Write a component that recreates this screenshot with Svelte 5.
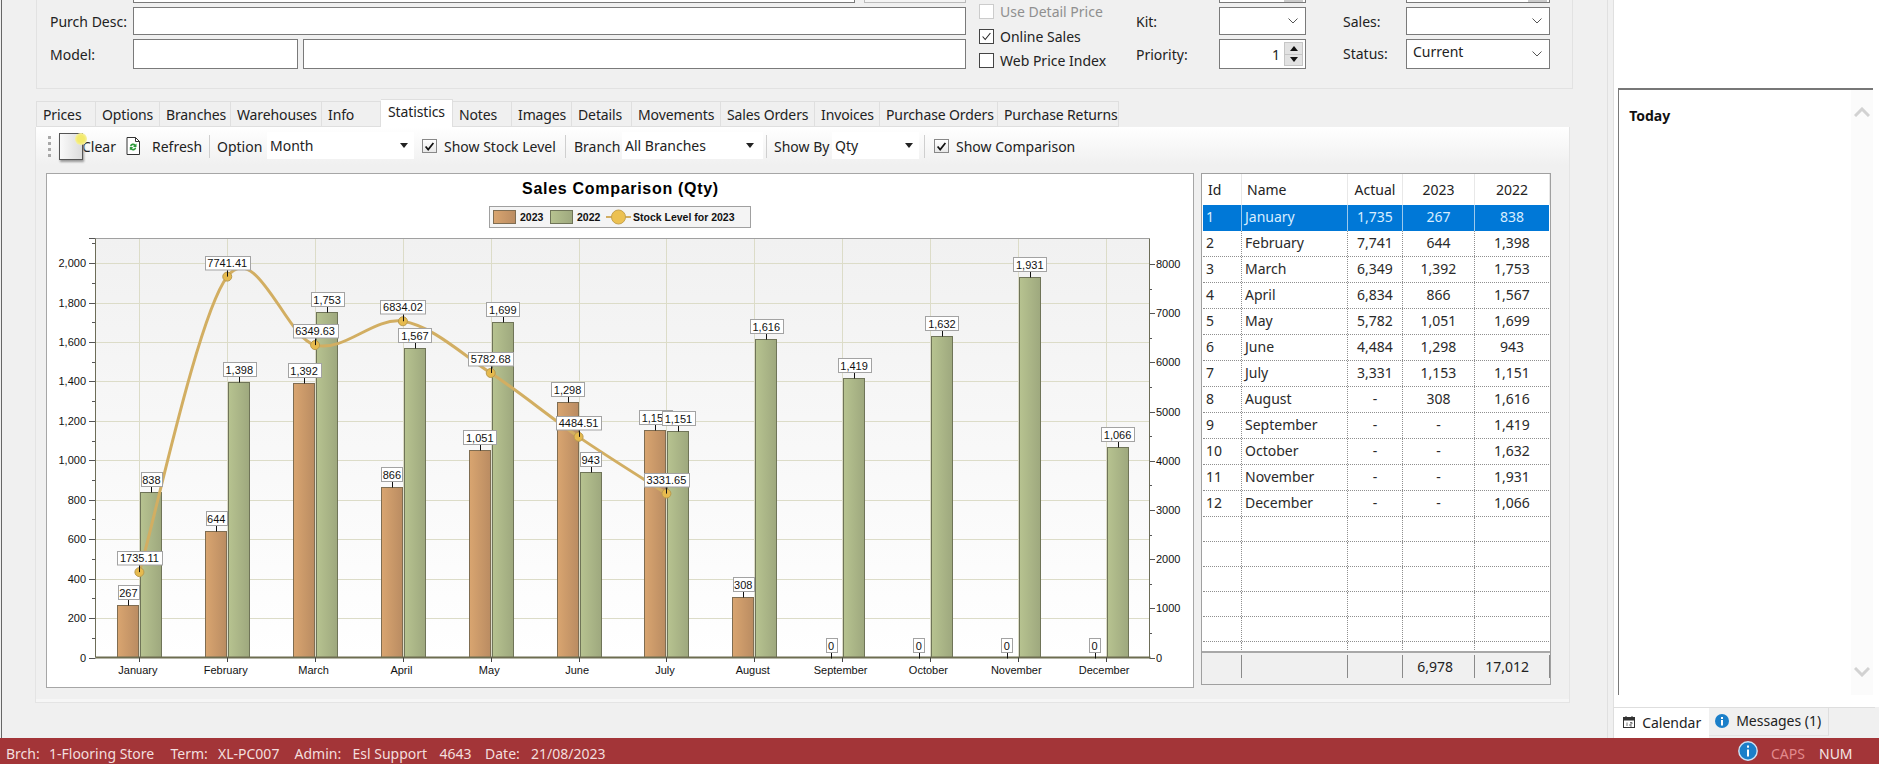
<script>
  const tabs = [['Prices',60],['Options',64],['Branches',71],['Warehouses',91],['Info',59],['Statistics',72],['Notes',59],['Images',60],['Details',60],['Movements',89],['Sales Orders',94],['Invoices',65],['Purchase Orders',118],['Purchase Returns',121]];
  const months = ['January','February','March','April','May','June','July','August','September','October','November','December'];
  const y23 = [267,644,1392,866,1051,1298,1153,308,0,0,0,0];
  const y22 = [838,1398,1753,1567,1699,943,1151,1616,1419,1632,1931,1066];
  const stock = [1735.11,7741.41,6349.63,6834.02,5782.68,4484.51,3331.65];
  const actual = ['1,735','7,741','6,349','6,834','5,782','4,484','3,331','-','-','-','-','-'];
  const fmt = (v) => v.toLocaleString('en-US');
  const t23 = y23.map((v) => (v === 0 ? '-' : fmt(v)));
  const status = [['Brch:',43],['1-Flooring Store',121.5],['Term:',47.5],['XL-PC007',76.5],['Admin:',58],['Esl Support',87],['4643',45.5],['Date:',46],['21/08/2023',90]];

  const L = 95.5, R = 1149.5, T = 238.5, B = 657.5;
  const step = (R - L) / 12;
  const cx = (i) => L + (i + 0.5) * step;
  const yl = (v) => B - v * 0.1972;
  const yr = (v) => B - v * 0.0492;
  const px = (v) => Math.round(v) + 0.5;

  const pts = stock.map((v, i) => [cx(i), yr(v)]);
  let spline = `M${pts[0][0]} ${pts[0][1]}`;
  for (let i = 0; i < pts.length - 1; i++) {
    const p0 = pts[Math.max(i - 1, 0)], p1 = pts[i], p2 = pts[i + 1], p3 = pts[Math.min(i + 2, pts.length - 1)];
    const c1 = [p1[0] + (p2[0] - p0[0]) / 6, p1[1] + (p2[1] - p0[1]) / 6];
    const c2 = [p2[0] - (p3[0] - p1[0]) / 6, p2[1] - (p3[1] - p1[1]) / 6];
    spline += ` C${c1[0]} ${c1[1]} ${c2[0]} ${c2[1]} ${p2[0]} ${p2[1]}`;
  }

  const majorsL = [0,200,400,600,800,1000,1200,1400,1600,1800,2000];
  const minorsL = [100,300,500,700,900,1100,1300,1500,1700,1900,2100];
  const majorsR = [0,1000,2000,3000,4000,5000,6000,7000,8000];
  const minorsR = [500,1500,2500,3500,4500,5500,6500,7500];

  const labelW = (s) => s.length <= 1 ? 11 : s.length === 3 ? 21 : s.length === 5 ? 33 : 45;
  const bar23 = y23.map((v, i) => ({ x: Math.round(cx(i) - 22) + 0.5, w: 21, top: px(yl(v)), v, lx: cx(i) - 11, s: fmt(v) }));
  const bar22 = y22.map((v, i) => ({ x: Math.round(cx(i) + 1) + 0.5, w: 21, top: px(yl(v)), v, lx: cx(i) + 12, s: fmt(v) }));
  const stockLabels = stock.map((v, i) => ({ x: pts[i][0], y: pts[i][1], s: v.toFixed(2) }));
</script>

<div class="page">
  <div class="stage">
    <main class="main">
      <section class="form">
        <div class="form-left">
          <div class="row clip"><span class="lab"></span><div class="input cut w722"></div><div class="input cut gray w102"></div></div>
          <div class="row r28"><span class="lab">Purch Desc:</span><div class="input grow"></div></div>
          <div class="row r30"><span class="lab">Model:</span><div class="input w165"></div><div class="input grow"></div></div>
        </div>
        <div class="checks">
          <label class="chk off"><span class="box"></span>Use Detail Price</label>
          <label class="chk"><span class="box"><svg viewBox="0 0 15 15" width="13" height="13"><path d="M3 7.500 6 11 12 3.500" fill="none" stroke="#222" stroke-width="1.200"/></svg></span>Online Sales</label>
          <label class="chk"><span class="box"></span>Web Price Index</label>
        </div>
        <div class="form-right">
          <span></span><div class="input cut stub"><i></i></div><span></span><span></span><div class="input cut stub"><i></i></div>
          <span class="lab2">Kit:</span>
          <div class="input combo"><svg viewBox="0 0 10 6" width="10" height="6"><path d="M.5.5 5 5 9.500.5" fill="none" stroke="#555"/></svg></div>
          <span></span>
          <span class="lab2">Sales:</span>
          <div class="input combo"><svg viewBox="0 0 10 6" width="10" height="6"><path d="M.5.5 5 5 9.500.5" fill="none" stroke="#555"/></svg></div>
          <span class="lab2 low">Priority:</span>
          <div class="input spin"><span class="num">1</span><div class="spinbtn"><b><svg viewBox="0 0 8 5" width="8" height="5"><path d="M4 0 8 5H0z" fill="#111"/></svg></b><b><svg viewBox="0 0 8 5" width="8" height="5"><path d="M0 0H8L4 5z" fill="#111"/></svg></b></div></div>
          <span></span>
          <span class="lab2">Status:</span>
          <div class="input combo"><span class="val">Current</span><svg viewBox="0 0 10 6" width="10" height="6"><path d="M.5.5 5 5 9.500.5" fill="none" stroke="#555"/></svg></div>
        </div>
      </section>

      <nav class="tabs">
        {#each tabs as t}
          <div class="tab" class:active={t[0] === 'Statistics'} style="width:{t[1]}px">{t[0]}</div>
        {/each}
      </nav>

      <section class="panel">
        <div class="toolbar">
          <span class="grip"><i></i><i></i><i></i><i></i></span>
          <button class="clear" aria-label="Clear"><span class="glow"></span></button>
          <span class="t-clear">Clear</span>
          <svg class="refresh" viewBox="0 0 14 18" width="14" height="18"><path d="M1 .5H9.500L13.500 4.500V17.500H1z" fill="#fff" stroke="#333"/><path d="M9.500.5V4.500H13.500" fill="none" stroke="#333"/><path d="M4 9a3.200 3.200 0 0 1 5.500-1.500L10.500 6.500V10H7L8.300 8.700A1.800 1.800 0 0 0 5.300 9.500zM10.300 11a3.200 3.200 0 0 1-5.500 1.500L3.800 13.500V10H7.300L6 11.300A1.800 1.800 0 0 0 9 10.500z" fill="#2f9a3c"/></svg>
          <span class="t-refresh">Refresh</span>
          <span class="sep s1"></span>
          <span class="t-opt">Option</span>
          <div class="dd d1"><span>Month</span><svg viewBox="0 0 8 5" width="8" height="5"><path d="M0 0H8L4 5z" fill="#222"/></svg></div>
          <span class="tick t1"><svg viewBox="0 0 15 15" width="13" height="13"><path d="M3 7.500 6 11 12 3.500" fill="none" stroke="#111" stroke-width="2"/></svg></span>
          <span class="t-stock">Show Stock Level</span>
          <span class="sep s2"></span>
          <span class="t-branch">Branch</span>
          <div class="dd d2"><span>All Branches</span><svg viewBox="0 0 8 5" width="8" height="5"><path d="M0 0H8L4 5z" fill="#222"/></svg></div>
          <span class="sep s3"></span>
          <span class="t-by">Show By</span>
          <div class="dd d3"><span>Qty</span><svg viewBox="0 0 8 5" width="8" height="5"><path d="M0 0H8L4 5z" fill="#222"/></svg></div>
          <span class="sep s4"></span>
          <span class="tick t2"><svg viewBox="0 0 15 15" width="13" height="13"><path d="M3 7.500 6 11 12 3.500" fill="none" stroke="#111" stroke-width="2"/></svg></span>
          <span class="t-comp">Show Comparison</span>
        </div>

        <div class="content">
          <div class="chart">
            <svg width="1146" height="513" viewBox="47 174 1146 513" font-family="'Liberation Sans',Arial,sans-serif" font-size="11" fill="#111">
              <defs>
                <linearGradient id="gO" x1="0" x2="1" y1="0" y2="0"><stop offset="0" stop-color="#d9a570"/><stop offset="1" stop-color="#ba8c62"/></linearGradient>
                <linearGradient id="gG" x1="0" x2="1" y1="0" y2="0"><stop offset="0" stop-color="#b7c390"/><stop offset="1" stop-color="#9ea87e"/></linearGradient>
                <linearGradient id="gP" x1="0" x2="0" y1="0" y2="1"><stop offset="0" stop-color="#f1f1f1"/><stop offset="1" stop-color="#ffffff"/></linearGradient>
              </defs>

              <text x="620.500" y="194" text-anchor="middle" font-size="16" font-weight="700" letter-spacing=".7" fill="#000">Sales Comparison (Qty)</text>

              <rect x="489.500" y="206.500" width="261" height="21" fill="#f4f4f4" stroke="#a0a0a0"/>
              <rect x="493.500" y="210.500" width="22" height="13" fill="url(#gO)" stroke="#7f6d52"/>
              <text x="520" y="221" font-size="10.500" font-weight="700">2023</text>
              <rect x="550.500" y="210.500" width="22" height="13" fill="url(#gG)" stroke="#6f7458"/>
              <text x="577" y="221" font-size="10.500" font-weight="700">2022</text>
              <line x1="606" x2="631" y1="217" y2="217" stroke="#d2ae62" stroke-width="2"/>
              <circle cx="618.500" cy="217" r="7" fill="#ecc152" stroke="#c5a24e"/>
              <text x="633" y="221" font-size="10.500" font-weight="700">Stock Level for 2023</text>

              <rect x={L} y={T} width={R - L} height={B - T} fill="url(#gP)"/>
              {#each majorsL.slice(1) as v}
                <line x1={L} x2={R} y1={px(yl(v))} y2={px(yl(v))} stroke="#dcdcc8"/>
              {/each}
              {#each months as m, i}
                <line x1={px(cx(i))} x2={px(cx(i))} y1={T} y2={B} stroke="#dcdcc8"/>
              {/each}
              <line x1={L} x2={R} y1={T} y2={T} stroke="#a0a0a0"/>

              {#each majorsL as v}
                <line x1="89" x2={L} y1={px(yl(v))} y2={px(yl(v))} stroke="#555"/>
                <text x="86" y={yl(v) + 4} text-anchor="end">{fmt(v)}</text>
              {/each}
              {#each minorsL as v}
                <line x1="92" x2={L} y1={px(yl(v))} y2={px(yl(v))} stroke="#555"/>
              {/each}
              <line x1="89" x2={L} y1={T} y2={T} stroke="#555"/>
              {#each majorsR as v}
                <line x1={R} x2="1155" y1={px(yr(v))} y2={px(yr(v))} stroke="#555"/>
                <text x="1156" y={yr(v) + 4}>{v}</text>
              {/each}
              {#each minorsR as v}
                <line x1={R} x2="1152" y1={px(yr(v))} y2={px(yr(v))} stroke="#555"/>
              {/each}
              <line x1={L} x2={L} y1={T} y2={B} stroke="#6d6d58"/>
              <line x1={R} x2={R} y1={T} y2={B} stroke="#6d6d58"/>

              {#each bar23 as b}
                {#if b.v > 0}<rect x={b.x} y={b.top} width={b.w} height={B - b.top} fill="url(#gO)" stroke="#7f6d52"/>{/if}
              {/each}
              {#each bar22 as b}
                <rect x={b.x} y={b.top} width={b.w} height={B - b.top} fill="url(#gG)" stroke="#6f7458"/>
              {/each}
              <line x1={L} x2={R + 1} y1={B} y2={B} stroke="#6d6d50" stroke-width="2"/>
              {#each months as m, i}
                <line x1={px(cx(i))} x2={px(cx(i))} y1={B} y2="662" stroke="#444"/>
                <text x={cx(i) - 1.500} y="674" text-anchor="middle">{m}</text>
              {/each}

              <path d={spline} fill="none" stroke="#d2ae62" stroke-width="3"/>
              {#each stockLabels as p}
                <circle cx={p.x} cy={p.y} r="4.500" fill="#e6ba4e" stroke="#b99a4f"/>
              {/each}

              {#each [...bar23, ...bar22] as b}
                <line x1={px(b.lx)} x2={px(b.lx)} y1={b.top - 6} y2={b.top} stroke="#111"/>
                <rect x={Math.round(b.lx - labelW(b.s) / 2) + 0.5} y={b.top - 20} width={labelW(b.s)} height="14" fill="#fff" stroke="#a3a3a3"/>
                <text x={b.lx} y={b.top - 9} text-anchor="middle">{b.s}</text>
              {/each}
              {#each stockLabels as p}
                <line x1={px(p.x)} x2={px(p.x)} y1={p.y - 7} y2={p.y} stroke="#111"/>
                <rect x={Math.round(p.x - 22.500) + 0.5} y={Math.round(p.y - 21) + 0.5} width="45" height="13.500" fill="#fff" stroke="#a3a3a3"/>
                <text x={p.x} y={Math.round(p.y - 10)} text-anchor="middle">{p.s}</text>
              {/each}
            </svg>
          </div>

          <div class="grid">
            <div class="g-head">
              <div class="left">Id</div><div class="left">Name</div><div>Actual</div><div>2023</div><div>2022</div>
            </div>
            <div class="g-body">
              {#each months as m, i}
                <div class="g-row" class:sel={i === 0}>
                  <div class="left">{i + 1}</div><div class="left">{m}</div><div>{actual[i]}</div><div>{t23[i]}</div><div>{fmt(y22[i])}</div>
                </div>
              {/each}
              {#each [0,1,2,3,4,5] as e}
                <div class="g-row empty"><div></div><div></div><div></div><div></div><div></div></div>
              {/each}
            </div>
            <div class="g-foot">
              <div></div><div></div><div></div><div>6,978</div><div>17,012</div>
            </div>
          </div>
        </div>
      </section>
    </main>

    <aside class="side">
      <div class="side-top"></div>
      <div class="cal">
        <div class="cal-body"><strong>Today</strong></div>
        <div class="cal-scroll">
          <svg viewBox="0 0 16 10" width="16" height="10"><path d="M1 9 8 2 15 9" fill="none" stroke="#d2d2d2" stroke-width="3"/></svg>
          <svg viewBox="0 0 16 10" width="16" height="10"><path d="M1 1 8 8 15 1" fill="none" stroke="#d2d2d2" stroke-width="3"/></svg>
        </div>
      </div>
      <div class="side-tabs">
        <div class="s-tab on">
          <svg viewBox="0 0 12 12" width="12" height="12"><rect x=".5" y="1.500" width="11" height="10" fill="#fff" stroke="#333"/><rect x=".5" y="1.500" width="11" height="3" fill="#333"/><path d="M3 0V3M9 0V3" stroke="#333"/><path d="M4 6.500V10M7 6.500H9V8H7V10H9" fill="none" stroke="#555" stroke-width=".8"/></svg>
          Calendar
        </div>
        <div class="s-tab msg">
          <svg viewBox="0 0 14 14" width="14" height="14"><circle cx="7" cy="7" r="7" fill="#1b7fc9"/><rect x="6" y="6" width="2" height="5.500" fill="#fff"/><rect x="6" y="3" width="2" height="2" fill="#fff"/></svg>
          Messages (1)
        </div>
      </div>
    </aside>
  </div>

  <footer class="status">
    {#each status as s}<span class="st" style="width:{s[1]}px">{s[0]}</span>{/each}
    <span class="spacer"></span>
    <svg class="info" viewBox="0 0 20 20" width="20" height="20"><circle cx="10" cy="10" r="9.200" fill="#1b7fc9" stroke="#cfe4f5" stroke-width="1.400"/><rect x="9" y="8.500" width="2" height="7" fill="#fff"/><rect x="9" y="4.500" width="2" height="2.200" fill="#fff"/></svg>
    <span class="st caps">CAPS</span>
    <span class="st num-l">NUM</span>
  </footer>
</div>

<style>
  :global(body) { margin: 0; background: #f0f0f0; }
  .page { width: 1879px; height: 764px; overflow: hidden; font: 14px "Noto Sans", "Open Sans", sans-serif; color: #222; display: flex; flex-direction: column; }
  .stage { display: flex; height: 738px; }
  .main { width: 1607px; box-sizing: border-box; border-left: 1px solid #666; margin-left: 1px; }

  .form { margin-left: 34px; width: 1537px; height: 89px; box-sizing: border-box; border: 1px solid #e2e2e2; border-top: none; display: flex; }
  .form-left { margin-left: 13px; width: 916px; display: flex; flex-direction: column; gap: 4px; }
  .row { display: flex; }
  .clip { height: 3px; gap: 9px; }
  .clip .lab { margin-right: -9px; }
  .r28 { height: 28px; align-items: stretch; }
  .r30 { height: 30px; gap: 5px; }
  .lab { width: 83px; line-height: 30px; flex: none; }
  .r30 .lab { margin-right: -5px; line-height: 32px; }
  .input { background: #fff; border: 1px solid #7a7a7a; box-sizing: border-box; }
  .cut { border-top: none; }
  .gray { border-color: #bbb; background: #f4f4f4; }
  .w722 { width: 722px; }
  .w102 { width: 102px; }
  .w165 { width: 165px; }
  .grow { flex: 1; }

  .checks { margin-left: 13px; width: 157px; flex: none; display: flex; flex-direction: column; padding-top: 1px; }
  .chk { display: flex; align-items: center; gap: 6px; height: 20px; margin-bottom: 4px; white-space: nowrap; }
  .chk:nth-child(2) { margin-top: 1px; }
  .chk:nth-child(3) { margin-bottom: 0; }
  .chk .box { width: 15px; height: 15px; box-sizing: border-box; border: 1px solid #444; background: #fff; display: flex; align-items: center; justify-content: center; flex: none; }
  .chk.off { color: #8f8f8f; }
  .chk.off .box { border-color: #ccc; }

  .form-right { display: grid; grid-template-columns: 83px 87px 37px 63px 144px; grid-template-rows: 3px 28px 30px; row-gap: 4px; align-content: start; }
  .stub { position: relative; }
  .stub i { position: absolute; right: 2px; bottom: 0; width: 19px; height: 2px; background: #ccc; }
  .lab2 { line-height: 30px; }
  .lab2.low { line-height: 32px; }
  .combo { display: flex; align-items: center; justify-content: flex-end; padding-right: 7px; }
  .combo .val { flex: 1; padding-left: 6px; margin-top: -5px; }
  .spin { display: flex; align-items: center; justify-content: flex-end; padding-right: 2px; gap: 4px; }
  .num { margin-top: 1px; }
  .spinbtn { width: 19px; height: 24px; display: flex; flex-direction: column; }
  .spinbtn b { flex: 1; background: #e2e2e2; border: 1px solid #c6c6c6; display: flex; align-items: center; justify-content: center; }
  .spinbtn b + b { border-top: none; }

  .tabs { display: flex; margin: 10px 0 0 34px; height: 28px; align-items: flex-end; }
  .tab { height: 26px; box-sizing: border-box; padding-left: 6px; line-height: 26px; letter-spacing: -.12px; border: 1px solid #dfdfdf; border-left: none; background: #f0f0f0; white-space: nowrap; }
  .tab:first-child { border-left: 1px solid #dfdfdf; }
  .tab.active { height: 28px; background: #fff; line-height: 24px; padding-left: 7px; border-bottom: none; }

  .panel { margin-left: 33px; width: 1535px; height: 576px; box-sizing: border-box; border: 1px solid #e4e4e4; border-top: none; background: #f0f0f0; box-shadow: inset 0 -3px 0 #f6f6f6; }
  .toolbar { height: 38px; background: linear-gradient(#fff, #f0f0f0); display: flex; align-items: center; }
  .grip { display: flex; flex-direction: column; gap: 3px; margin-left: 12px; width: 11px; }
  .grip i { width: 3px; height: 3px; background: #a8a8a8; }
  .clear { width: 24px; height: 27px; padding: 0; border: 1px solid #555; background: linear-gradient(90deg, #fafafa, #dcdcdc); box-shadow: 1px 2px 2px #999; position: relative; flex: none; align-self: flex-start; margin-top: 6px; }
  .glow { position: absolute; right: -5px; top: -1px; width: 12px; height: 12px; border-radius: 50%; background: radial-gradient(#f3ea6c 40%, #f6f0a0 70%, transparent); }
  .t-clear { margin-left: -1px; width: 44px; }
  .refresh { flex: none; width: 14px; margin-right: 12px; }
  .t-refresh { width: 57px; }
  .sep { width: 1px; height: 23px; background: #cfcfcf; flex: none; }
  .t-opt { width: 50px; margin-left: 7px; }
  .dd { background: #fff; height: 27px; display: flex; align-items: center; justify-content: space-between; box-sizing: border-box; padding: 0 3px; margin-top: -2px; flex: none; }
  .d1 { width: 147px; padding-right: 6px; }
  .d2 { width: 141px; padding-right: 9px; }
  .d3 { width: 87px; padding-right: 6px; }
  .tick { width: 15px; height: 14px; box-sizing: border-box; border: 1px solid #888; background: linear-gradient(#fff, #e8e8e8); display: flex; align-items: center; justify-content: center; flex: none; }
  .t1 { margin-left: 8px; }
  .t-stock { width: 121px; margin-left: 7px; white-space: nowrap; }
  .t-branch { width: 48px; margin-left: 8px; }
  .t-by { width: 58px; margin-left: 7px; white-space: nowrap; }
  .s3 { margin-left: 3px; }
  .s4 { margin-left: 5px; }
  .t2 { margin-left: 9px; }
  .t-comp { margin-left: 7px; white-space: nowrap; }

  .content { display: flex; padding: 8px 0 0 10px; align-items: flex-start; }
  .chart { width: 1148px; height: 515px; box-sizing: border-box; border: 1px solid #a6a6a6; background: #fff; flex: none; }
  .chart svg { display: block; }

  .grid { margin-left: 7px; width: 350px; height: 512px; box-sizing: border-box; border: 1px solid #a0a0a0; padding: 0 1px; background: #fff; display: flex; flex-direction: column; }
  .g-head, .g-row, .g-foot { display: grid; grid-template-columns: 39px 106px 55px 72px 75px; text-align: center; }
  .g-head { height: 31px; line-height: 31px; flex: none; }
  .g-head > div { border-right: 1px solid #e8e8e8; }
  .g-head .left { text-align: left; padding-left: 5px; }
  .g-body { height: 446px; overflow: hidden; flex: none; }
  .g-row { height: 26px; box-sizing: border-box; line-height: 23px; border-bottom: 1px dotted #8f8f8f; color: #2a2a2a; }
  .g-row > div { border-right: 1px dotted #8f8f8f; min-width: 0; }
  .g-row .left { text-align: left; padding-left: 3px; }
  .g-row.sel { background: #0078d7; color: #d9eeff; border-bottom: none; }
  .g-row.sel > div { border-right: 1px solid #9cc9ec; }
  .g-row.empty { height: 25px; }
  .g-foot { flex: 1; margin: 0 -1px; padding-left: 1px; background: #f0f0f0; border-top: 2px solid #a8a8a8; text-align: right; }
  .g-foot > div { margin: 2px 0 6px; border-right: 1px solid #8a8a8a; padding-right: 21px; height: 23px; box-sizing: border-box; line-height: 23px; }
  .g-foot > div:last-child { padding-right: 20px; }

  .side { width: 272px; box-sizing: border-box; display: flex; flex-direction: column; border-left: 1px solid #e0e0e0; }
  .side-top { height: 88px; margin-left: 5px; background: #fff; border-left: 1px solid #e0e0e0; flex: none; }
  .cal { height: 619px; margin-left: 5px; padding-left: 4px; padding-right: 6px; border-left: 1px solid #e0e0e0; background: #fff; display: flex; flex: none; box-sizing: border-box; }
  .cal-body { flex: 1; border-left: 1px solid #7a7a7a; border-top: 2px solid #777; height: 607px; box-sizing: border-box; padding: 16px 0 0 10px; }
  .cal-body strong { font-size: 14px; font-weight: 700; color: #111; }
  .cal-scroll { width: 22px; height: 607px; box-sizing: border-box; border-top: 2px solid #777; background: #fbfbfb; display: flex; flex-direction: column; justify-content: space-between; align-items: center; padding: 17px 0 18px; }
  .side-tabs { height: 31px; margin: 0 4px 0 5px; border: 1px solid #dedede; border-width: 1px 0 0 1px; display: flex; background: #f0f0f0; }
  .s-tab { display: flex; align-items: center; gap: 7px; height: 30px; box-sizing: border-box; white-space: nowrap; padding-bottom: 2px; }
  .s-tab.on { width: 95px; background: #fff; padding-left: 9px; color: #222; }
  .s-tab.msg { width: 120px; height: 28px; padding-left: 6px; border-right: 1px solid #dedede; border-bottom: 1px solid #e4e4e4; }

  .status { height: 26px; flex: none; background: #a33538; color: #f3dede; display: flex; align-items: center; padding-left: 6px; box-sizing: border-box; white-space: nowrap; }
  .st { flex: none; padding-top: 4px; }
  .spacer { flex: 1; }
  .info { flex: none; margin-right: 13px; }
  .caps { color: #e28a8c; width: 48px; }
  .num-l { color: #f5e6e6; width: 60px; }
</style>
